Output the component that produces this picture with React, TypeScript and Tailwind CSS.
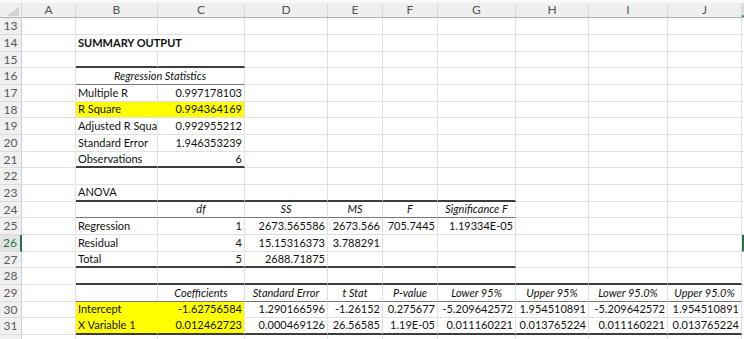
import React from 'react';

type Cell = {
  t: string;
  a?: 'l' | 'r' | 'c';
  i?: boolean;
  b?: boolean;
  y?: boolean;
  w?: string;
  skip?: string;
};

const COLS = ['A', 'B', 'C', 'D', 'E', 'F', 'G', 'H', 'I', 'J', 'K'];
const COL_W = ['w-[54px]', 'w-[82px]', 'w-[87px]', 'w-[83px]', 'w-[55px]', 'w-[55px]', 'w-[78px]', 'w-[73px]', 'w-[79px]', 'w-[74px]', 'flex-1'];

const r = (t: string): Cell => ({ t, a: 'r' });
const hd = (t: string): Cell => ({ t, a: 'c', i: true });
const yl = (t: string, a: 'l' | 'r' = 'l'): Cell => ({ t, a, y: true });

const DATA: Record<number, Record<string, Cell>> = {
  14: { B: { t: 'SUMMARY OUTPUT', b: true, w: 'w-[169px]', skip: 'C' } },
  16: { B: { t: 'Regression Statistics', i: true, a: 'c', w: 'w-[169px]', skip: 'C' } },
  17: { B: { t: 'Multiple R' }, C: r('0.997178103') },
  18: { B: yl('R Square'), C: yl('0.994364169', 'r') },
  19: { B: { t: 'Adjusted R Square' }, C: r('0.992955212') },
  20: { B: { t: 'Standard Error' }, C: r('1.946353239') },
  21: { B: { t: 'Observations' }, C: r('6') },
  23: { B: { t: 'ANOVA' } },
  24: { C: hd('df'), D: hd('SS'), E: hd('MS'), F: hd('F'), G: hd('Significance F') },
  25: { B: { t: 'Regression' }, C: r('1'), D: r('2673.565586'), E: r('2673.566'), F: r('705.7445'), G: r('1.19334E-05') },
  26: { B: { t: 'Residual' }, C: r('4'), D: r('15.15316373'), E: r('3.788291') },
  27: { B: { t: 'Total' }, C: r('5'), D: r('2688.71875') },
  29: {
    C: hd('Coefficients'), D: hd('Standard Error'), E: hd('t Stat'), F: hd('P-value'),
    G: hd('Lower 95%'), H: hd('Upper 95%'), I: hd('Lower 95.0%'), J: hd('Upper 95.0%'),
  },
  30: {
    B: yl('Intercept'), C: yl('-1.62756584', 'r'), D: r('1.290166596'), E: r('-1.26152'), F: r('0.275677'),
    G: r('-5.209642572'), H: r('1.954510891'), I: r('-5.209642572'), J: r('1.954510891'),
  },
  31: {
    B: yl('X Variable 1'), C: yl('0.012462723', 'r'), D: r('0.000469126'), E: r('26.56585'), F: r('1.19E-05'),
    G: r('0.011160221'), H: r('0.013765224'), I: r('0.011160221'), J: r('0.013765224'),
  },
};

// bottom borders of the output tables
const LINES: Record<number, [string, 'thick' | 'thin']> = {
  15: ['BC', 'thick'],
  16: ['BC', 'thin'],
  21: ['BC', 'thick'],
  23: ['BCDEFG', 'thick'],
  24: ['BCDEFG', 'thin'],
  27: ['BCDEFG', 'thick'],
  28: ['BCDEFGHIJ', 'thick'],
  29: ['BCDEFGHIJ', 'thin'],
  31: ['BCDEFGHIJ', 'thick'],
};

const ROWS = Array.from({ length: 20 }, (_, k) => k + 13);

function ColumnHeader() {
  return (
    <div className="flex h-[18px] border-t-[3px] border-t-[#f9f9f9] bg-[#efefef] border-b border-b-[#b3b3b3]">
      <div className="relative w-[22px] shrink-0 border-r border-r-[#d4d4d4]">
        <svg className="absolute right-[2px] bottom-[1px]" width="12" height="9" viewBox="0 0 12 9">
          <polygon points="12,0 12,9 0,9" fill="#d2d2d2" />
        </svg>
      </div>
      {COLS.map((c, k) => (
        <div
          key={c}
          className={`${COL_W[k]} shrink-0 flex items-center justify-center text-[12px] text-[#555] border-r border-r-[#dadada] ${
            c === 'K' ? 'bg-[#e2e2e2] border-b-2 border-b-[#217346]' : ''
          }`}
        >
          {c === 'K' ? '' : c}
        </div>
      ))}
    </div>
  );
}

function Row({ n, idx }: { n: number; idx: number }) {
  const row = DATA[n] || {};
  const line = LINES[n];
  const selected = n === 26;
  const skip = Object.values(row).map((c) => c.skip).filter(Boolean);
  const h = idx % 3 === 2 ? 'h-[16px]' : 'h-[17px]';

  return (
    <div className={`flex ${h}`}>
      <div
        className={`w-[22px] shrink-0 flex items-center justify-center text-[12px] border-b border-b-[#dcdcdc] ${
          selected
            ? 'bg-[#e3e3e3] text-[#217346] border-r-2 border-r-[#217346]'
            : 'bg-[#f0f0f0] text-[#5a5a5a] border-r border-r-[#cfcfcf]'
        }`}
      >
        {n < 32 ? n : ''}
      </div>
      {COLS.map((c, k) => {
        if (skip.includes(c)) return null;
        const cell = row[c];
        const lineType = line && line[0].includes(c) ? line[1] : null;
        let bottom = 'border-b border-b-[#e1e1e1]';
        if (lineType === 'thick') bottom = 'border-b-2 border-b-[#3d3d3d]';
        else if (lineType === 'thin') bottom = 'border-b border-b-[#777]';
        else if (cell?.y && DATA[n + 1]?.[c]?.y) bottom = 'border-b border-b-[#ffff00]';
        const right = cell?.y && c === 'B' ? 'border-r border-r-[#ffff00]' : 'border-r border-r-[#e1e1e1]';
        const align = cell?.a === 'r' ? 'justify-end' : cell?.a === 'c' ? 'justify-center' : 'justify-start';
        const sel = selected && c === 'K' ? 'border-l-2 border-l-[#217346] border-y-2 border-y-[#217346]' : '';
        return (
          <div
            key={c}
            className={`${cell?.w ?? COL_W[k]} shrink-0 flex items-center px-[2px] overflow-hidden whitespace-nowrap ${bottom} ${right} ${align} ${
              cell?.y ? 'bg-[#ffff00]' : ''
            } ${cell?.i ? 'italic' : ''} ${cell?.b ? 'font-bold' : ''} ${sel}`}
          >
            {cell?.t}
          </div>
        );
      })}
    </div>
  );
}

export default function App() {
  return (
    <div className="w-[744px] h-[339px] overflow-hidden bg-white font-['Lato',sans-serif] text-[11px] text-[#111]">
      <ColumnHeader />
      {ROWS.map((n, idx) => (
        <Row key={n} n={n} idx={idx} />
      ))}
    </div>
  );
}
